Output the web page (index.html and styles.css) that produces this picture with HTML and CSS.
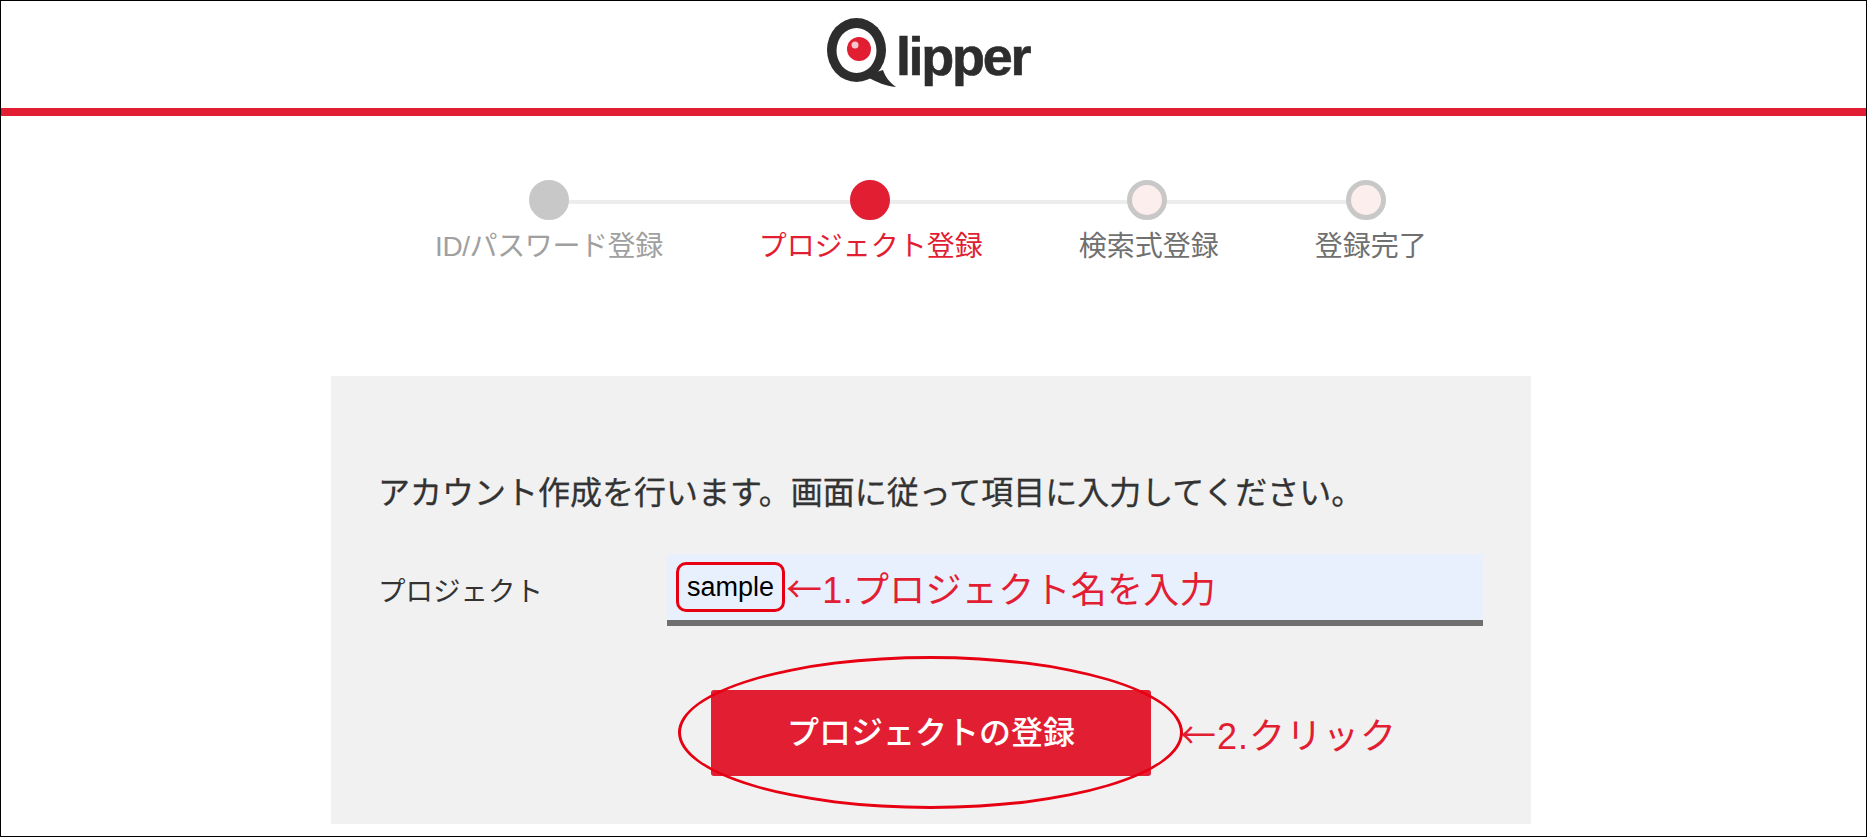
FILE: index.html
```html
<!DOCTYPE html>
<html lang="ja">
<head>
    <meta charset="UTF-8">
    <meta name="viewport" content="width=device-width, initial-scale=1.0">
    <title>Qlipper - プロジェクト登録</title>
    <link rel="stylesheet" href="styles.css">
</head>
<body>
    <div class="frame">
        <header class="site-header">
            <div class="logo">
                <svg class="logo-mark" width="72" height="70" viewBox="0 0 72 70">
                    <path d="M46 55 L56 52 C58 58 62 64 69 69 C58 68 50 64 42 60 Z" fill="#2d2d2d"/>
                    <ellipse cx="29.5" cy="32" rx="29.5" ry="32" fill="#2d2d2d"/>
                    <ellipse cx="29.5" cy="32.5" rx="20" ry="22.5" fill="#fff"/>
                    <circle cx="32" cy="31" r="12" fill="#e21e33"/>
                    <circle cx="28" cy="27" r="3.5" fill="#f6c6cc"/>
                </svg>
                <span class="logo-text">lipper</span>
            </div>
        </header>

        <ol class="steps">
            <li class="step step-done"><span class="dot"></span>ID/パスワード登録</li>
            <li class="step step-active"><span class="dot"></span>プロジェクト登録</li>
            <li class="step step-next"><span class="dot"></span>検索式登録</li>
            <li class="step step-last"><span class="dot"></span>登録完了</li>
        </ol>

        <main class="panel">
            <p class="lead">アカウント作成を行います。画面に従って項目に入力してください。</p>

            <div class="form-row">
                <div class="form-label">プロジェクト</div>
                <div class="form-input">
                    <span class="input-value">sample</span>
                    <span class="note"><span class="arrow">←</span>1.プロジェクト名を入力</span>
                </div>
            </div>

            <div class="submit-row">
                <div class="submit-wrap">
                    <button class="submit-btn" type="button">プロジェクトの登録</button>
                    <span class="ellipse"></span>
                </div>
                <span class="note note-click"><span class="arrow">←</span>2.クリック</span>
            </div>
        </main>
    </div>
</body>
</html>
```

FILE: styles.css
```css
* {
    box-sizing: border-box;
}

html, body {
    margin: 0;
    height: 100%;
    overflow: hidden;
}

body {
    font-family: "Liberation Sans", "Noto Sans CJK JP", sans-serif;
    background: #fff;
    color: #333;
}

.frame {
    height: 837px;
    border: 1px solid #000;
}

.site-header {
    height: 115px;
    border-bottom: 8px solid #e21e33;
    display: flex;
    justify-content: center;
    padding: 17px 11px 0 0;
}

.logo {
    display: flex;
    align-items: flex-start;
}

.logo-mark {
    display: block;
}

.logo-text {
    font-weight: 700;
    font-size: 54px;
    letter-spacing: -2.3px;
    line-height: 62px;
    color: #2d2d2d;
    margin: 7px 0 0 -3px;
    -webkit-text-stroke: 0.6px #2d2d2d;
}

/* ステップ表示 */
.steps {
    position: relative;
    display: flex;
    gap: 96px;
    width: max-content;
    list-style: none;
    margin: 0 0 0 434px;
    padding: 64px 0 0;
}

.steps::before {
    content: "";
    position: absolute;
    top: 84px;
    left: 114px;
    right: 54px;
    height: 4px;
    background: #ececec;
}

.step {
    position: relative;
    display: flex;
    flex-direction: column;
    align-items: center;
    font-size: 28px;
    line-height: 40px;
    color: #707070;
}

.dot {
    width: 40px;
    height: 40px;
    margin-bottom: 7px;
    border-radius: 50%;
    background: #fdeeee;
    border: 5px solid #c8c8c8;
}

.step-done {
    color: #a0a0a0;
    letter-spacing: -0.4px;
}

.step-done .dot {
    background: #c8c8c8;
}

.step-active {
    color: #e21e33;
}

.step-active .dot {
    margin-right: 2px;
    background: #e21e33;
    border-color: #e21e33;
}

.step-next .dot {
    margin-right: 3px;
}

.step-last .dot {
    margin-right: 9px;
}

/* フォーム */
.panel {
    width: 1200px;
    height: 448px;
    margin: 109px 0 0 330px;
    padding: 95px 48px 0 47px;
    background: #f1f1f1;
}

.lead {
    margin: 0;
    font-size: 32px;
    line-height: 44px;
    white-space: nowrap;
    -webkit-text-stroke: 0.3px #333;
}

.form-row {
    display: flex;
    align-items: center;
    margin-top: 39px;
}

.form-label {
    width: 289px;
    padding-top: 4px;
    font-size: 27.5px;
    line-height: 40px;
}

.form-input {
    display: flex;
    align-items: center;
    flex: 1;
    height: 72px;
    padding-left: 9px;
    background: #e8f0fe;
    border-bottom: 6px solid #707070;
}

.input-value {
    width: 109px;
    height: 50px;
    border: 3px solid #e60012;
    border-radius: 10px;
    font-size: 27px;
    line-height: 44px;
    color: #000;
    text-align: center;
}

.note {
    padding-top: 4px;
    font-size: 36px;
    line-height: 48px;
    color: #e21e33;
    white-space: nowrap;
}

.arrow {
    font-family: "Noto Sans CJK JP", sans-serif;
}

.form-input .note {
    margin-left: 1px;
    letter-spacing: 0.3px;
}

.submit-row {
    display: flex;
    align-items: center;
    margin-top: 64px;
    padding-left: 333px;
}

.submit-wrap {
    position: relative;
}

.submit-btn {
    display: block;
    width: 440px;
    height: 86px;
    padding: 0 0 6px;
    border: 0;
    border-radius: 3px;
    background: #e21e33;
    color: #fff;
    font-family: inherit;
    font-size: 32px;
    font-weight: 500;
}

.ellipse {
    position: absolute;
    top: -34px;
    right: -32px;
    bottom: -33px;
    left: -33px;
    border: 3px solid #e60012;
    border-radius: 50%;
}

.note-click {
    margin-left: 29px;
    letter-spacing: 1px;
}
```
